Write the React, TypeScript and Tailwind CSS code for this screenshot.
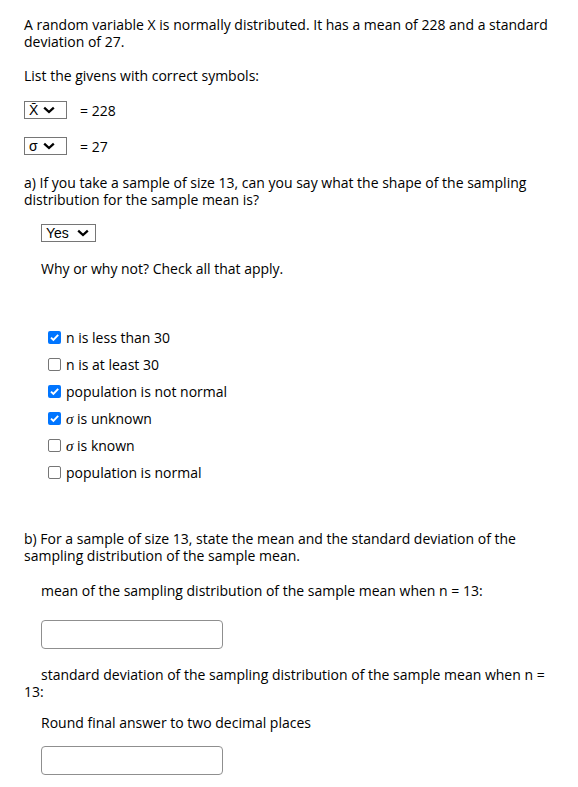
const CHECKS = [
  { label: 'n is less than 30', checked: true },
  { label: 'n is at least 30', checked: false },
  { label: 'population is not normal', checked: true },
  { label: 'is unknown', checked: true, sigma: true },
  { label: 'is known', checked: false, sigma: true },
  { label: 'population is normal', checked: false },
];

function Chevron() {
  return (
    <svg width="12" height="8" viewBox="0 0 12 8" className="shrink-0">
      <path d="M1.2 1.6 L6 6 L10.8 1.6" fill="none" stroke="#000" strokeWidth="2.3" />
    </svg>
  );
}

function FakeSelect({ value, width, slot }: { value: React.ReactNode; width: string; slot: string }) {
  return (
    <div
      className={`${width} h-[18px] border border-[#767676] bg-white flex items-center pl-[4px] text-[14px] leading-none font-['Liberation_Sans',sans-serif] text-black`}
    >
      <span className={`${slot} shrink-0`}>{value}</span>
      <Chevron />
    </div>
  );
}

function Checkbox({ checked }: { checked: boolean }) {
  if (checked) {
    return (
      <div className="w-[13px] h-[13px] rounded-[2px] bg-[#0075ff] flex items-center justify-center shrink-0">
        <svg width="11" height="11" viewBox="0 0 11 11">
          <path d="M2 5.6 L4.4 8 L9.2 2.8" fill="none" stroke="#fff" strokeWidth="1.9" />
        </svg>
      </div>
    );
  }
  return <div className="w-[13px] h-[13px] rounded-[2px] border border-[#767676] bg-white shrink-0" />;
}

function TextBox() {
  return <div className="w-[182px] h-[29px] border border-[#8f8f8f] rounded-[4px] bg-white" />;
}

export default function App() {
  return (
    <div className="min-h-[787px] bg-white text-black font-['Open_Sans',sans-serif] text-[14px] leading-[17px] pl-[24px] pr-[16px] pt-[16px]">
      <p>
        A random variable X is normally distributed. It has a mean of 228 and a standard deviation of 27.
      </p>

      <p className="mt-[17px]">List the givens with correct symbols:</p>

      <div className="mt-[17px] flex items-center gap-[13px]">
        <FakeSelect width="w-[43px]" slot="w-[14px]" value={<span>X&#x0304;</span>} />
        <span>= 228</span>
      </div>

      <div className="mt-[18px] flex items-center gap-[13px]">
        <FakeSelect width="w-[43px]" slot="w-[14px]" value={<span>σ</span>} />
        <span>= 27</span>
      </div>

      <p className="mt-[19px]">
        a) If you take a sample of size 13, can you say what the shape of the sampling distribution for the sample mean is?
      </p>

      <div className="pl-[17px]">
        <div className="mt-[16px]">
          <FakeSelect width="w-[55px]" slot="w-[31px]" value="Yes" />
        </div>

        <p className="mt-[18px]">Why or why not? Check all that apply.</p>

        <div className="mt-[47px] pl-[7px]">
          {CHECKS.map(c => (
            <div key={c.label} className="h-[27px] flex items-center gap-[5px]">
              <Checkbox checked={c.checked} />
              <span>
                {c.sigma && <span className="italic font-['Liberation_Serif',serif] text-[15px]">σ</span>}
                {c.sigma ? ' ' : ''}
                {c.label}
              </span>
            </div>
          ))}
        </div>
      </div>

      <p className="mt-[44px]">
        b) For a sample of size 13, state the mean and the standard deviation of the sampling distribution of the sample mean.
      </p>

      <div className="pl-[17px]">
        <p className="mt-[18px]">mean of the sampling distribution of the sample mean when n = 13:</p>
        <div className="mt-[21px]">
          <TextBox />
        </div>
      </div>

      <p className="mt-[17px] indent-[17px]">
        standard deviation of the sampling distribution of the sample mean when n = 13:
      </p>

      <div className="pl-[17px]">
        <p className="mt-[14px]">Round final answer to two decimal places</p>
        <div className="mt-[15px]">
          <TextBox />
        </div>
      </div>
    </div>
  );
}
